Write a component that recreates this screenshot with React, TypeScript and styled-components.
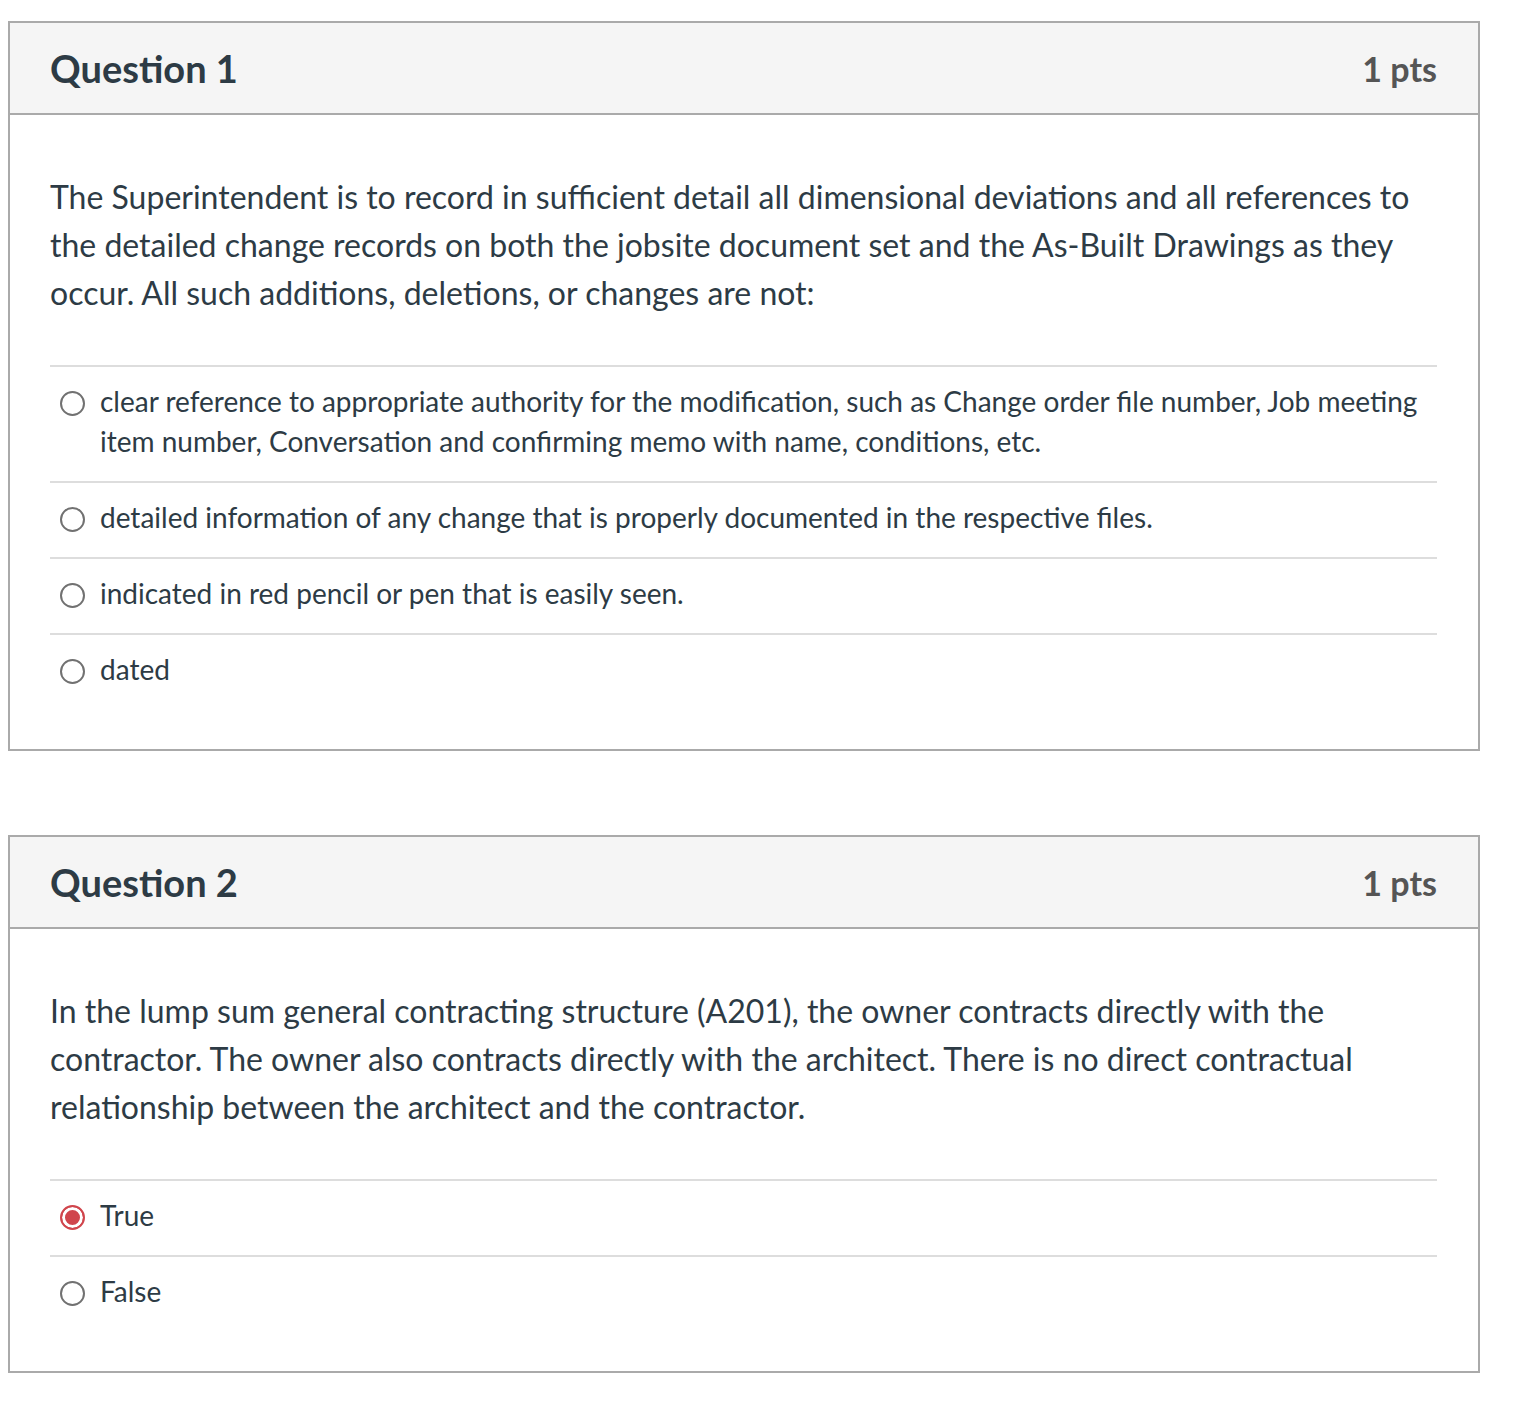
import styled, { createGlobalStyle } from 'styled-components';

const GlobalStyle = createGlobalStyle`
  body {
    margin: 8px;
    background: #ffffff;
    font-family: Lato, "Noto Sans", sans-serif;
    color: #2d3b45;
  }
`;

type Answer = { text: string; checked?: boolean };

type Question = {
  title: string;
  points: string;
  text: string;
  answers: Answer[];
};

const questions: Question[] = [
  {
    title: 'Question 1',
    points: '1 pts',
    text: 'The Superintendent is to record in sufficient detail all dimensional deviations and all references to the detailed change records on both the jobsite document set and the As-Built Drawings as they occur. All such additions, deletions, or changes are not:',
    answers: [
      {
        text: 'clear reference to appropriate authority for the modification, such as Change order file number, Job meeting item number, Conversation and confirming memo with name, conditions, etc.',
      },
      { text: 'detailed information of any change that is properly documented in the respective files.' },
      { text: 'indicated in red pencil or pen that is easily seen.' },
      { text: 'dated' },
    ],
  },
  {
    title: 'Question 2',
    points: '1 pts',
    text: 'In the lump sum general contracting structure (A201), the owner contracts directly with the contractor. The owner also contracts directly with the architect. There is no direct contractual relationship between the architect and the contractor.',
    answers: [{ text: 'True', checked: true }, { text: 'False' }],
  },
];

function App() {
  return (
    <>
      <GlobalStyle />
      <Page>
        {questions.map(q => (
          <Card key={q.title}>
            <Header>
              <Title>{q.title}</Title>
              <Points>{q.points}</Points>
            </Header>
            <Body>
              <QuestionText>{q.text}</QuestionText>
              <AnswerList>
                {q.answers.map(a => (
                  <AnswerRow key={a.text}>
                    <Radio $checked={!!a.checked} />
                    <AnswerText>{a.text}</AnswerText>
                  </AnswerRow>
                ))}
              </AnswerList>
            </Body>
          </Card>
        ))}
      </Page>
    </>
  );
}

export default App;

const Page = styled.div`
  display: flex;
  flex-direction: column;
  gap: 84px;
  padding-top: 13px;
`;

const Card = styled.div`
  width: 1468px;
  border: 2px solid #aaaaaa;
  background: #ffffff;
`;

const Header = styled.div`
  display: flex;
  align-items: center;
  justify-content: space-between;
  height: 90px;
  padding: 0 41px 0 40px;
  background: #f5f5f5;
  border-bottom: 2px solid #aaaaaa;
`;

const Title = styled.h2`
  margin: 0;
  font-size: 38px;
  font-weight: 700;
  color: #2d3b45;
`;

const Points = styled.div`
  font-size: 34px;
  font-weight: 700;
  color: #555555;
`;

const Body = styled.div`
  padding: 58px 41px 40px 40px;
`;

const QuestionText = styled.p`
  margin: 0 0 48px;
  font-size: 32px;
  line-height: 48px;
`;

const AnswerList = styled.div`
  display: flex;
  flex-direction: column;
`;

const AnswerRow = styled.div`
  display: flex;
  align-items: flex-start;
  padding: 14px 10px 20px;
  border-top: 2px solid #dddddd;
`;

const Radio = styled.span<{ $checked: boolean }>`
  flex: none;
  box-sizing: border-box;
  width: 25px;
  height: 25px;
  margin-top: 10px;
  margin-right: 15px;
  border-radius: 50%;
  border: 2px solid ${p => (p.$checked ? '#d0454c' : '#717171')};
  background: ${p => (p.$checked ? '#d0454c' : '#ffffff')};
  box-shadow: ${p => (p.$checked ? 'inset 0 0 0 3px #ffffff' : 'none')};
`;

const AnswerText = styled.div`
  font-size: 28px;
  line-height: 40px;
`;
